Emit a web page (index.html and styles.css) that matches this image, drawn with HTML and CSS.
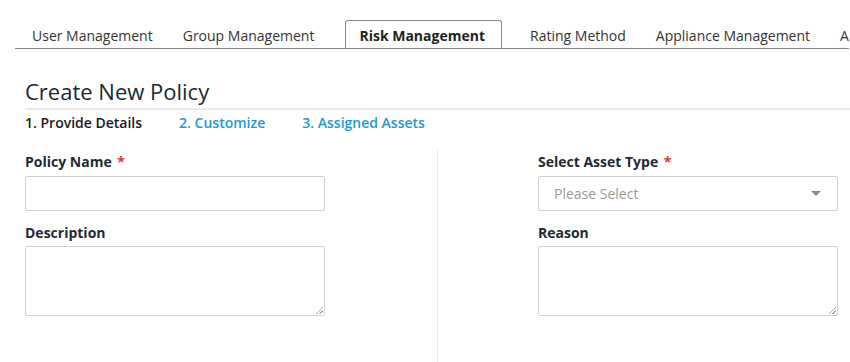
FILE: index.html
```html
<!DOCTYPE html>
<html>
<head>
<meta charset="utf-8">
<link rel="stylesheet" href="styles.css">
</head>
<body>
<div class="page">
  <nav class="tabs">
    <div class="tab tab-first">User Management</div>
    <div class="tab">Group Management</div>
    <div class="tab active">Risk Management</div>
    <div class="tab after-active">Rating Method</div>
    <div class="tab">Appliance Management</div>
    <div class="tab">Audit Log</div>
  </nav>
  <main class="content">
    <h1 class="title">Create New Policy</h1>
    <div class="steps">
      <span class="step current">1. Provide Details</span>
      <span class="step link">2. Customize</span>
      <span class="step link">3. Assigned Assets</span>
    </div>
    <div class="form">
      <div class="col col-left">
        <label class="label">Policy Name <span class="req">*</span></label>
        <div class="input"></div>
        <label class="label label-ta">Description</label>
        <div class="textarea"><span class="grip"></span></div>
      </div>
      <div class="divider"></div>
      <div class="col col-right">
        <label class="label">Select Asset Type <span class="req">*</span></label>
        <div class="input select"><span class="placeholder">Please Select</span><span class="caret"></span></div>
        <label class="label label-ta">Reason</label>
        <div class="textarea"><span class="grip"></span></div>
      </div>
    </div>
  </main>
</div>
</body>
</html>
```
FILE: styles.css
```css
html, body {
  margin: 0;
  padding: 0;
  background: #fff;
  overflow: hidden;
}
body {
  font-family: "Open Sans", "Noto Sans", sans-serif;
  color: #222;
  width: 850px;
  height: 362px;
}
.page {
  width: 850px;
}
.tabs {
  display: flex;
  margin-left: 15px;
  margin-right: 1px;
  margin-top: 20px;
  border-bottom: 1px solid #8a8a8a;
  height: 28px;
  white-space: nowrap;
  overflow: hidden;
}
.tab {
  font-size: 14px;
  color: #333;
  line-height: 30px;
  padding: 0 14px;
  flex: none;
  border: 1px solid transparent;
  border-bottom: none;
}
.tab-first {
  padding-left: 16px;
}
.tab.active {
  font-weight: 700;
  color: #1f1f1f;
  border-color: #8a8a8a;
  border-radius: 3px 3px 0 0;
  background: #fff;
  padding: 0 16px 0 13px;
  margin-left: 16px;
  margin-bottom: -1px;
  height: 28px;
}
.tab.after-active {
  margin-left: 13px;
}
.content {
  padding-left: 25px;
}
.title {
  font-size: 22px;
  font-weight: 400;
  color: #1b2733;
  margin: 0;
  padding-top: 27px;
  line-height: 30px;
  padding-bottom: 2px;
  border-bottom: 2px solid #e8e8e8;
}
.steps {
  display: flex;
  gap: 37px;
  font-size: 14px;
  font-weight: 600;
  line-height: 20px;
  margin-top: 3px;
}
.step.current {
  color: #1a1a1a;
}
.step.link {
  color: #1a9ad6;
}
.form {
  display: flex;
  margin-top: 17px;
}
.col {
  width: 300px;
  display: flex;
  flex-direction: column;
}
.col-left {
  padding-top: 2px;
}
.col-right {
  padding-top: 2px;
  margin-left: 100px;
}
.divider {
  width: 1px;
  height: 220px;
  background: #e6e6e6;
  margin-left: 112px;
}
.label {
  font-size: 14px;
  font-weight: 700;
  color: #1f2a36;
  line-height: 20px;
  margin-bottom: 4px;
}
.label-ta {
  margin-bottom: 3px;
}
.req {
  color: #d9381e;
  margin-left: 2px;
}
.input {
  height: 33px;
  border: 1px solid #cfcfcf;
  border-radius: 2px;
  margin-bottom: 12px;
  box-sizing: content-box;
}
.select {
  display: flex;
  align-items: center;
  padding-left: 15px;
  width: 283px;
}
.placeholder {
  font-size: 14px;
  color: #9a9a9a;
  flex: 1;
}
.caret {
  width: 0;
  height: 0;
  border-left: 5px solid transparent;
  border-right: 5px solid transparent;
  border-top: 5px solid #8a8a8a;
  margin-right: 16px;
}
.textarea {
  height: 68px;
  border: 1px solid #cfcfcf;
  border-radius: 2px;
  position: relative;
}
.grip {
  position: absolute;
  right: 1px;
  bottom: 1px;
  width: 7px;
  height: 7px;
  background: linear-gradient(135deg, transparent 45%, #aaa 45%, #aaa 55%, transparent 55%, transparent 70%, #aaa 70%, #aaa 80%, transparent 80%);
}
```
